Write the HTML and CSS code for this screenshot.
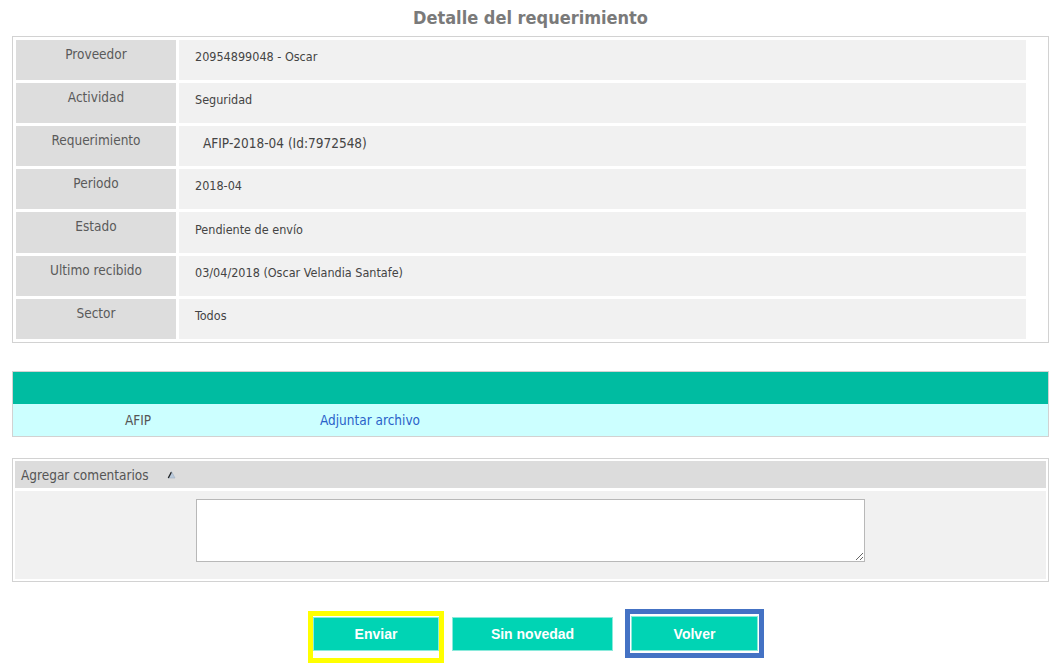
FILE: index.html
```html
<!DOCTYPE html>
<html lang="es">
<head>
  <meta charset="UTF-8">
  <meta name="viewport" content="width=device-width, initial-scale=1.0">
  <title>Detalle del requerimiento</title>
  <link rel="stylesheet" href="styles.css">
</head>
<body>
  <div class="page">
    <h1 class="page-title">Detalle del requerimiento</h1>

    <!-- Datos del requerimiento -->
    <div class="panel">
      <table class="detail-table">
        <tr>
          <td class="label">Proveedor</td>
          <td class="value">20954899048 - Oscar</td>
        </tr>
        <tr>
          <td class="label">Actividad</td>
          <td class="value">Seguridad</td>
        </tr>
        <tr>
          <td class="label">Requerimiento</td>
          <td class="value value-big">AFIP-2018-04 (Id:7972548)</td>
        </tr>
        <tr>
          <td class="label">Periodo</td>
          <td class="value">2018-04</td>
        </tr>
        <tr class="row-tall">
          <td class="label">Estado</td>
          <td class="value">Pendiente de envío</td>
        </tr>
        <tr>
          <td class="label">Ultimo recibido</td>
          <td class="value">03/04/2018 (Oscar Velandia Santafe)</td>
        </tr>
        <tr>
          <td class="label">Sector</td>
          <td class="value">Todos</td>
        </tr>
      </table>
    </div>

    <!-- Archivos -->
    <div class="panel files-panel">
      <div class="files-head"></div>
      <div class="files-row">
        <span class="files-name">AFIP</span>
        <a class="files-link" href="#">Adjuntar archivo</a>
      </div>
    </div>

    <!-- Comentarios -->
    <div class="panel comments-panel">
      <div class="comments-head">
        <span>Agregar comentarios</span>
        <svg class="toggle-icon" width="9" height="9" viewBox="0 0 9 9">
          <polygon points="1,8 4.5,1.5 8,8" fill="#b9c9db" stroke="#9fb0c2" stroke-width="0.6"/>
          <line x1="1.3" y1="8" x2="4.3" y2="2.2" stroke="#222" stroke-width="1.3"/>
        </svg>
      </div>
      <div class="comments-body">
        <textarea class="comments-input"></textarea>
      </div>
    </div>

    <!-- Acciones -->
    <div class="actions">
      <span class="mark mark-yellow"><button class="btn btn-send">Enviar</button></span>
      <button class="btn btn-none">Sin novedad</button>
      <span class="mark mark-blue"><button class="btn btn-back">Volver</button></span>
    </div>
  </div>
</body>
</html>
```

FILE: styles.css
```css
* {
  margin: 0;
  padding: 0;
  box-sizing: border-box;
}
body {
  font-family: "DejaVu Sans Condensed", "DejaVu Sans", sans-serif;
  background: #fff;
  color: #555;
}
.page {
  width: 1049px;
  padding-left: 12px;
}
.page-title {
  font-size: 18px;
  font-weight: bold;
  color: #7a7a7a;
  text-align: center;
  line-height: 22px;
  padding-top: 7px;
  margin-bottom: 7px;
}
/* Caja con borde gris */
.panel {
  border: 1px solid #d2d2d2;
}
.detail-table {
  border-collapse: separate;
  border-spacing: 3px;
  width: 1016px;
}
.detail-table tr {
  height: 40px;
}
.detail-table tr.row-tall {
  height: 41px;
}
.detail-table .label {
  width: 160px;
  background: #dddddd;
  text-align: center;
  vertical-align: top;
  font-size: 13.5px;
  line-height: 16px;
  padding-top: 6px;
  color: #5a5a5a;
}
.detail-table .value {
  background: #f1f1f1;
  vertical-align: middle;
  font-size: 12.5px;
  padding: 0 0 7px 16px;
  color: #444;
}
.detail-table .value-big {
  font-size: 13.5px;
  padding-left: 24px;
}
/* Archivos */
.files-panel {
  margin-top: 28px;
}
.files-head {
  height: 32px;
  background: #00bca1;
}
.files-row {
  height: 32px;
  background: #ccffff;
  display: grid;
  grid-template-columns: 250px 214px 1fr;
  align-items: center;
  text-align: center;
  font-size: 13.5px;
}
.files-name {
  color: #555;
}
.files-link {
  color: #2a62c9;
  text-decoration: none;
}
/* Comentarios */
.comments-panel {
  margin-top: 21px;
  padding: 2px;
}
.comments-head {
  height: 27px;
  background: #dcdcdc;
  display: flex;
  align-items: center;
  padding-left: 6px;
  font-size: 13.5px;
  color: #555;
}
.toggle-icon {
  margin-left: 18px;
}
.comments-body {
  margin-top: 3px;
  background: #f1f1f1;
  padding: 8px 0 17px;
  display: flex;
  justify-content: center;
}
.comments-input {
  width: 669px;
  height: 63px;
  border: 1px solid #b8b8b8;
  background: #fff;
  display: block;
}
/* Botones */
.actions {
  display: flex;
  align-items: flex-start;
  padding-left: 296px;
  margin-top: 27px;
}
.btn {
  display: block;
  height: 34px;
  background: #00d4b4;
  border: 1px solid #8aeadb;
  color: #fff;
  font-family: "Liberation Sans", Arial, sans-serif;
  font-weight: bold;
  font-size: 14px;
  cursor: pointer;
}
.btn-send {
  width: 126px;
}
.btn-none {
  width: 161px;
  margin: 8px 12px 0 8px;
}
.btn-back {
  width: 127px;
  height: 35px;
}
.mark {
  display: block;
  border: 5px solid;
}
.mark-yellow {
  border-color: #ffff00;
  padding: 1px 0 7px;
  margin-top: 2px;
}
.mark-blue {
  border-color: #4472c4;
  padding: 2px 1px;
}
```
